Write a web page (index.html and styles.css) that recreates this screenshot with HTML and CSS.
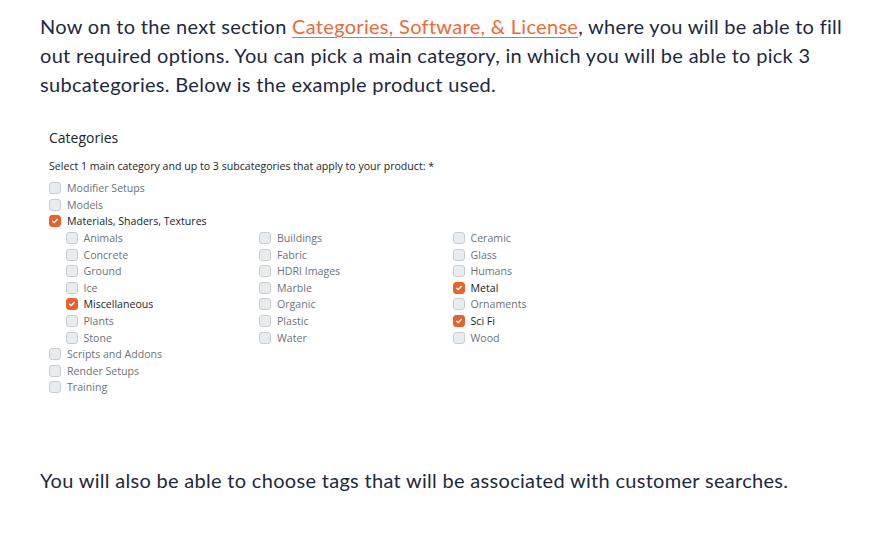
FILE: index.html
```html
<!DOCTYPE html>
<html>
<head>
<meta charset="utf-8">
<link rel="stylesheet" href="styles.css">
</head>
<body>
<p class="para intro">Now on to the next section <a href="#" class="link">Categories, Software, &amp; License</a>, where you will be able to fill out required options. You can pick a main category, in which you will be able to pick 3 subcategories. Below is the example product used.</p>

<div class="shot">
  <div class="shot-title">Categories</div>
  <div class="shot-hint">Select 1 main category and up to 3 subcategories that apply to your product: *</div>
  <div class="opt"><span class="cb"></span><span class="lbl">Modifier Setups</span></div>
  <div class="opt"><span class="cb"></span><span class="lbl">Models</span></div>
  <div class="opt on"><span class="cb"><svg viewBox="0 0 12 12"><path d="M3.2 6.3 5 8 8.8 4" fill="none" stroke="#fff" stroke-width="1.6" stroke-linecap="round" stroke-linejoin="round"/></svg></span><span class="lbl">Materials, Shaders, Textures</span></div>
  <div class="subgrid">
    <div class="col">
      <div class="opt"><span class="cb"></span><span class="lbl">Animals</span></div>
      <div class="opt"><span class="cb"></span><span class="lbl">Concrete</span></div>
      <div class="opt"><span class="cb"></span><span class="lbl">Ground</span></div>
      <div class="opt"><span class="cb"></span><span class="lbl">Ice</span></div>
      <div class="opt on"><span class="cb"><svg viewBox="0 0 12 12"><path d="M3.2 6.3 5 8 8.8 4" fill="none" stroke="#fff" stroke-width="1.6" stroke-linecap="round" stroke-linejoin="round"/></svg></span><span class="lbl">Miscellaneous</span></div>
      <div class="opt"><span class="cb"></span><span class="lbl">Plants</span></div>
      <div class="opt"><span class="cb"></span><span class="lbl">Stone</span></div>
    </div>
    <div class="col">
      <div class="opt"><span class="cb"></span><span class="lbl">Buildings</span></div>
      <div class="opt"><span class="cb"></span><span class="lbl">Fabric</span></div>
      <div class="opt"><span class="cb"></span><span class="lbl">HDRI Images</span></div>
      <div class="opt"><span class="cb"></span><span class="lbl">Marble</span></div>
      <div class="opt"><span class="cb"></span><span class="lbl">Organic</span></div>
      <div class="opt"><span class="cb"></span><span class="lbl">Plastic</span></div>
      <div class="opt"><span class="cb"></span><span class="lbl">Water</span></div>
    </div>
    <div class="col">
      <div class="opt"><span class="cb"></span><span class="lbl">Ceramic</span></div>
      <div class="opt"><span class="cb"></span><span class="lbl">Glass</span></div>
      <div class="opt"><span class="cb"></span><span class="lbl">Humans</span></div>
      <div class="opt on"><span class="cb"><svg viewBox="0 0 12 12"><path d="M3.2 6.3 5 8 8.8 4" fill="none" stroke="#fff" stroke-width="1.6" stroke-linecap="round" stroke-linejoin="round"/></svg></span><span class="lbl">Metal</span></div>
      <div class="opt"><span class="cb"></span><span class="lbl">Ornaments</span></div>
      <div class="opt on"><span class="cb"><svg viewBox="0 0 12 12"><path d="M3.2 6.3 5 8 8.8 4" fill="none" stroke="#fff" stroke-width="1.6" stroke-linecap="round" stroke-linejoin="round"/></svg></span><span class="lbl">Sci Fi</span></div>
      <div class="opt"><span class="cb"></span><span class="lbl">Wood</span></div>
    </div>
  </div>
  <div class="opt"><span class="cb"></span><span class="lbl">Scripts and Addons</span></div>
  <div class="opt"><span class="cb"></span><span class="lbl">Render Setups</span></div>
  <div class="opt"><span class="cb"></span><span class="lbl">Training</span></div>
</div>

<p class="para outro">You will also be able to choose tags that will be associated with customer searches.</p>
</body>
</html>
```

FILE: styles.css
```css
* { box-sizing: border-box; }
html, body { background: #fff; }
body {
  margin: 0;
  padding: 0 30px 0 40px;
}
.para {
  font-family: "Lato", "DejaVu Sans", sans-serif;
  font-size: 20px;
  line-height: 29px;
  color: #1e2940;
  letter-spacing: 0.3px;
  margin: 0;
}
.intro { margin-top: 12px; }
.link { color: #f06a35; text-decoration: underline; text-underline-offset: 3px; text-decoration-thickness: 1px; }
.outro { margin-top: 70px; }

.shot {
  margin-top: 29px;
  padding-left: 9px;
  font-family: "Open Sans", "Noto Sans", sans-serif;
  font-size: 10.6px;
  color: #6c737a;
}
.shot-title {
  font-size: 14px;
  line-height: 20px;
  color: #212529;
}
.shot-hint {
  margin-top: 10px;
  line-height: 17px;
  color: #212529;
  margin-bottom: 5px;
}
.opt {
  display: flex;
  align-items: center;
  gap: 6px;
  height: 16.6px;
}
.cb {
  width: 12px;
  height: 12px;
  border: 1px solid #c9cdd1;
  border-radius: 3px;
  background: #e9ecef;
  display: flex;
  align-items: center;
  justify-content: center;
  flex: none;
}
.cb svg { width: 12px; height: 12px; }
.on .cb { background: #e8632b; border-color: #e8632b; }
.on .lbl { color: #212529; }
.subgrid {
  display: grid;
  grid-template-columns: 193.5px 193.5px 193.5px;
  padding-left: 16.5px;
}
```
